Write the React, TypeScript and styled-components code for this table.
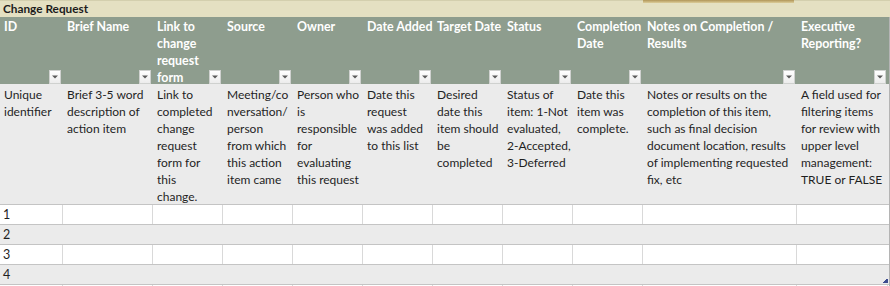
import React from "react";
import styled, { createGlobalStyle } from "styled-components";

const GlobalStyle = createGlobalStyle`
  html, body {
    margin: 0;
    padding: 0;
    background: #ffffff;
    overflow: hidden;
  }
  body {
    font-family: Lato, "Liberation Sans", Arial, sans-serif;
  }
`;

type Column = {
  width: number;
  title: string[];
  desc: string[];
};

const columns: Column[] = [
  { width: 63, title: ["ID"], desc: ["Unique", "identifier"] },
  { width: 90, title: ["Brief Name"], desc: ["Brief 3-5 word", "description of", "action item"] },
  {
    width: 70,
    title: ["Link to", "change", "request", "form"],
    desc: ["Link to", "completed", "change", "request", "form for", "this", "change."],
  },
  {
    width: 70,
    title: ["Source"],
    desc: ["Meeting/co", "nversation/", "person", "from which", "this action", "item came"],
  },
  {
    width: 70,
    title: ["Owner"],
    desc: ["Person who", "is", "responsible", "for", "evaluating", "this request"],
  },
  { width: 70, title: ["Date Added"], desc: ["Date this", "request", "was added", "to this list"] },
  {
    width: 70,
    title: ["Target Date"],
    desc: ["Desired", "date this", "item should", "be", "completed"],
  },
  {
    width: 70,
    title: ["Status"],
    desc: ["Status of", "item: 1-Not", "evaluated,", "2-Accepted,", "3-Deferred"],
  },
  { width: 70, title: ["Completion", "Date"], desc: ["Date this", "item was", "complete."] },
  {
    width: 154,
    title: ["Notes on Completion /", "Results"],
    desc: [
      "Notes or results on the",
      "completion of this item,",
      "such as final decision",
      "document location, results",
      "of implementing requested",
      "fix, etc",
    ],
  },
  {
    width: 91,
    title: ["Executive", "Reporting?"],
    desc: [
      "A field used for",
      "filtering items",
      "for review with",
      "upper level",
      "management:",
      "TRUE or FALSE",
    ],
  },
];

const gridTemplate = columns.map((c) => `${c.width}px`).join(" ");

const Sheet = styled.div`
  width: 890px;
  display: flex;
  flex-direction: column;
`;

const TitleBar = styled.div`
  position: relative;
  height: 17px;
  box-sizing: border-box;
  border-top: 1px solid #d3cfae;
  background: #e4e0c2;
  padding-left: 3px;
  font-size: 11.8px;
  font-weight: bold;
  line-height: 16px;
  color: #1c1c1c;
`;

/* thick edge left on the selected cell above the notes column */
const SelectionEdge = styled.span`
  position: absolute;
  top: -1px;
  left: 643px;
  width: 151px;
  height: 3px;
  background: linear-gradient(#b09558, #dccd9a);
`;

const Table = styled.div`
  width: 889px;
  border-right: 1px solid #b4b4b4;
  display: flex;
  flex-direction: column;
`;

const Row = styled.div<{ $cols: string }>`
  display: grid;
  grid-template-columns: ${(p) => p.$cols};
`;

const HeaderRow = styled(Row)`
  height: 67px;
  background: #8e9d8e;
`;

const HeaderCell = styled.div`
  position: relative;
  padding: 1px 3px 0 4px;
  font-size: 12.4px;
  font-weight: bold;
  line-height: 17px;
  color: #ffffff;
  white-space: nowrap;
`;

const Line = styled.span`
  display: block;
`;

const FilterButton = styled.span`
  position: absolute;
  right: 2px;
  bottom: 2px;
  width: 12px;
  height: 14px;
  box-sizing: border-box;
  border: 1px solid #cfd1cf;
  background: linear-gradient(#ffffff, #ececec);
  display: flex;
  align-items: center;
  justify-content: center;
`;

const DescRow = styled(Row)`
  height: 120px;
  background: #ebebeb;
`;

const DescCell = styled.div`
  padding: 2px 3px 0 4px;
  font-size: 12px;
  line-height: 17px;
  color: #1f1f1f;
  white-space: nowrap;
`;

const DataRow = styled(Row)<{ $shaded: boolean }>`
  position: relative;
  height: 20px;
  box-sizing: border-box;
  border-top: 1px solid #c4c4c4;
  background: ${(p) => (p.$shaded ? "#ebebeb" : "#ffffff")};
`;

const DataCell = styled.div<{ $lined: boolean }>`
  box-sizing: border-box;
  padding-left: 3px;
  font-size: 12.5px;
  line-height: 20px;
  color: #1f1f1f;
  border-right: ${(p) => (p.$lined ? "1px solid #d9d9d9" : "none")};
  &:last-child {
    border-right: none;
  }
`;

const ResizeHandle = styled.span`
  position: absolute;
  right: 1px;
  bottom: 1px;
  width: 5px;
  height: 5px;
  background: linear-gradient(135deg, transparent 50%, #3d4c8f 50%);
`;

const GridBelow = styled(Row)`
  height: 8px;
  border-top: 1px solid #c4c4c4;
  background: #ffffff;
`;

const GridCell = styled.div`
  border-right: 1px solid #d9d9d9;
`;

const FilterArrow = () => (
  <svg width="6" height="4" viewBox="0 0 6 4">
    <polygon points="0,0.5 6,0.5 3,3.5" fill="#5a5a5a" />
  </svg>
);

const rows = ["1", "2", "3", "4"];

export default function App() {
  return (
    <>
      <GlobalStyle />
      <Sheet>
        <TitleBar>
          Change Request
          <SelectionEdge />
        </TitleBar>
        <Table>
          <HeaderRow $cols={gridTemplate}>
            {columns.map((col, i) => (
              <HeaderCell key={i}>
                {col.title.map((t, j) => (
                  <Line key={j}>{t}</Line>
                ))}
                <FilterButton>
                  <FilterArrow />
                </FilterButton>
              </HeaderCell>
            ))}
          </HeaderRow>
          <DescRow $cols={gridTemplate}>
            {columns.map((col, i) => (
              <DescCell key={i}>
                {col.desc.map((t, j) => (
                  <Line key={j}>{t}</Line>
                ))}
              </DescCell>
            ))}
          </DescRow>
          {rows.map((n, r) => {
            const shaded = r % 2 === 1;
            return (
              <DataRow key={n} $cols={gridTemplate} $shaded={shaded}>
                {columns.map((_, i) => (
                  <DataCell key={i} $lined={!shaded}>
                    {i === 0 ? n : null}
                  </DataCell>
                ))}
                {r === rows.length - 1 && <ResizeHandle />}
              </DataRow>
            );
          })}
          <GridBelow $cols={gridTemplate}>
            {columns.map((_, i) => (
              <GridCell key={i} />
            ))}
          </GridBelow>
        </Table>
      </Sheet>
    </>
  );
}
